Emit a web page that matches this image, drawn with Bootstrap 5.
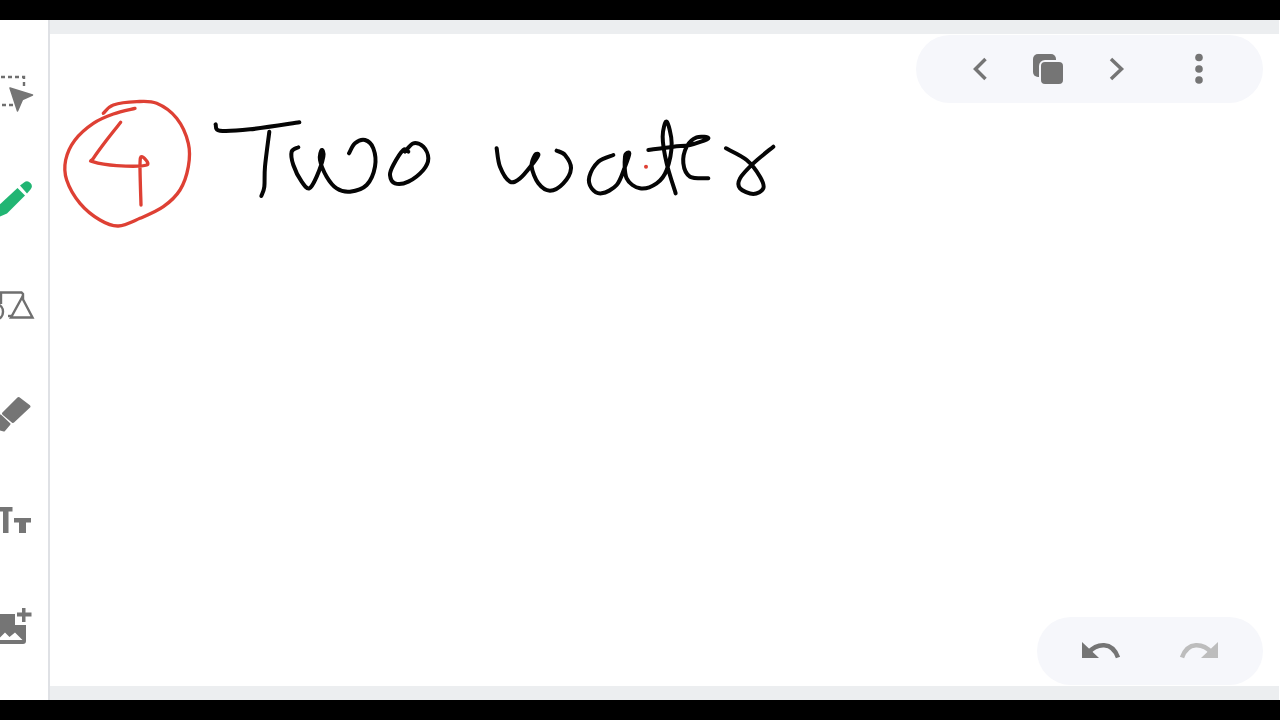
<!DOCTYPE html>
<html lang="en">
<head>
<meta charset="utf-8">
<title>Whiteboard</title>
<link href="https://cdn.jsdelivr.net/npm/bootstrap@5.3.0/dist/css/bootstrap.min.css" rel="stylesheet">
<style>
html,body{height:100%;margin:0;overflow:hidden;background:#000}
.stage{width:1280px;height:720px;padding:20px 0;background:#000}
.board{height:680px;background:#fff}
.toolrail{width:50px;border-right:2px solid #dfe1e5;background:#fff;padding-top:22px}
.toolslot{display:block;width:48px;height:107px}
.sheet{width:1230px;position:relative;background:#fff}
.strip{height:14px;background:#eceef0;margin-right:1px}
.inkarea{height:652px;position:relative}
.inklayer{position:absolute;left:0;top:0;width:1230px;height:652px}
.floatbar{position:absolute;background:#f6f7fb;border-radius:34px;height:68px}
.navbar-float{left:866px;top:1px;width:347px;padding-left:30px}
.history-float{left:987px;top:583px;width:226px;padding-left:13px}
.navslot{display:block;width:68px;height:68px}
.navslot-menu{margin-left:15px}
.histslot{display:block;width:100px;height:68px}
.ic{fill:#757575}
.ics{fill:none;stroke:#6f6f6f;stroke-width:2.400}
.ink-red{fill:none;stroke:#de4034;stroke-width:10;stroke-linecap:round;stroke-linejoin:round}
.ink-black{fill:none;stroke:#050505;stroke-width:12;stroke-linecap:round;stroke-linejoin:round}
</style>
</head>
<body>
<div class="stage">
  <div class="board d-flex">
    <div class="toolrail d-flex flex-column flex-shrink-0">
      <svg class="toolslot" viewBox="0 42 48 107">
        <path class="ics" stroke-dasharray="4 3" d="M1 77H24V86"/>
        <path class="ics" stroke-dasharray="4 3" d="M2 105H14"/>
        <path class="ic" stroke="#757575" stroke-width="1.500" stroke-linejoin="round" d="M10 88L32.500 95L22.500 99.500L17.500 111Z"/>
      </svg>
      <svg class="toolslot" viewBox="0 149 48 107">
        <path fill="#21b573" d="M20 185.500L24 182.500a4.800 4.800 0 0 1 6.500 7L27 193.500Z"/>
        <path fill="#21b573" d="M17.500 188L25 195.500L7 213.500L0 216.500L-3 216V207Z"/>
      </svg>
      <svg class="toolslot" viewBox="0 256 48 107">
        <path class="ics" d="M0 292.500H21.500L23 294V299"/>
        <path class="ics" d="M1 293V304"/>
        <path class="ics" d="M-3 304a8 8 0 0 1 0 15.500"/>
        <path class="ics" d="M22 297.500L32.500 317.500H11Z"/>
        <path class="ics" d="M8 316H13"/>
      </svg>
      <svg class="toolslot" viewBox="0 363 48 107">
        <path class="ic" stroke="#757575" stroke-width="3" stroke-linejoin="round" d="M18.500 398.500L29 406.500L13 421.500L3.500 413.500Z"/>
        <path class="ic" stroke="#757575" stroke-width="2" stroke-linejoin="round" d="M-2 416L0.500 415.500L9.500 424L4 430.500L-2 429Z"/>
      </svg>
      <svg class="toolslot" viewBox="0 470 48 107">
        <path class="ic" d="M0 507H12.500V511.500H8.500V533H3V511.500H0Z"/>
        <path class="ic" d="M14 518H31V522.500H26V533H19V522.500H14Z"/>
      </svg>
      <svg class="toolslot" viewBox="0 577 48 107">
        <path class="ic" d="M0 614H15V625H26V641a3 3 0 0 1-3 3H0Z"/>
        <path fill="#fff" d="M0 640V637.500L5 632.500L9.500 637L15 632.500L22.500 640Z"/>
        <path class="ic" d="M22 608H25.500V612.500H31.500V616.500H25.500V622H22V616.500H17V612.500H22Z"/>
      </svg>
    </div>
    <div class="sheet d-flex flex-column">
      <div class="strip"></div>
      <div class="inkarea flex-grow-1">
        <svg class="inklayer" viewBox="50 34 1230 652">
          <g transform="translate(50 90) scale(.33333)">
            <path class="ink-red js-ink" data-pts="160,70 190,45 260,35 320,40 380,85 415,160 415,230 390,300 340,350 270,385 205,408 150,390 90,340 50,270 47,210 75,150 130,100 190,72 255,55"/>
            <path class="ink-red js-ink" data-pts="212,97 170,150 130,205 128,215 200,227 290,225 275,200 270,225 273,345"/>
            <path class="ink-black js-ink" data-pts="497,103 510,122 600,118 748,97"/>
            <path class="ink-black js-ink" data-pts="658,125 645,230 643,290 634,318"/>
            <path class="ink-black js-ink" data-pts="745,172 725,185 730,225 755,275 778,295 800,260 820,200 815,180 810,210 830,260 860,295 900,305 950,285 975,230 970,175 945,150 915,160 897,190"/>
            <path class="ink-black js-ink" data-pts="1075,185 1060,180 1030,225 1020,255 1035,280 1075,275 1120,240 1135,205 1120,170 1090,160 1065,185"/>
          </g>
          <g transform="translate(470 100) scale(.33333)">
            <path class="ink-black js-ink" data-pts="80,145 90,200 120,245 150,235 185,195 205,165 195,165 185,200 205,250 240,272 280,250 303,205 285,165 260,152"/>
            <path class="ink-black js-ink" data-pts="430,165 385,185 358,230 365,265 395,280 440,255 465,200 478,160 465,170 470,235 510,265 560,250 590,210 605,130 590,65 578,110 590,190 617,280"/>
            <path class="ink-black js-ink" data-pts="535,150 610,140 660,135 715,115 680,112 650,140 640,190 660,230 715,235"/>
            <path class="ink-black js-ink" data-pts="768,145 830,180 870,230 880,265 850,282 810,265 810,235 850,190 910,140"/>
            <circle cx="528" cy="200" r="6" fill="#de4034"/>
          </g>
        </svg>
        <div class="floatbar navbar-float d-flex align-items-center">
          <svg class="navslot" viewBox="946 35 68 68">
            <path fill="none" stroke="#757575" stroke-width="3.500" d="M985.500 59L975.500 69L985.500 79"/>
          </svg>
          <svg class="navslot" viewBox="1014 35 68 68">
            <rect class="ic" x="1033" y="54" width="23" height="23" rx="5"/>
            <rect class="ic" stroke="#f6f7fb" stroke-width="2" x="1040" y="61" width="24" height="24" rx="5"/>
          </svg>
          <svg class="navslot" viewBox="1082 35 68 68">
            <path fill="none" stroke="#757575" stroke-width="3.500" d="M1111 59L1121.500 69L1111 79"/>
          </svg>
          <svg class="navslot navslot-menu" viewBox="1165 35 68 68">
            <circle class="ic" cx="1199" cy="57.500" r="3.800"/>
            <circle class="ic" cx="1199" cy="69" r="3.800"/>
            <circle class="ic" cx="1199" cy="80" r="3.800"/>
          </svg>
        </div>
        <div class="floatbar history-float d-flex align-items-center">
          <svg class="histslot" viewBox="1050 617 100 68">
            <path class="ic" d="M1082 642V658H1099Z"/>
            <path fill="none" stroke="#757575" stroke-width="4.500" d="M1088 653C1097 643 1112 641 1118 657.500"/>
          </svg>
          <svg class="histslot" viewBox="1150 617 100 68">
            <path fill="#bdbdbd" d="M1218 642V658H1201Z"/>
            <path fill="none" stroke="#bdbdbd" stroke-width="4.500" d="M1212 653C1203 643 1188 641 1182 657.500"/>
          </svg>
        </div>
      </div>
      <div class="strip"></div>
    </div>
  </div>
</div>
<script src="https://cdn.jsdelivr.net/npm/bootstrap@5.3.0/dist/js/bootstrap.bundle.min.js"></script>
<script>
document.querySelectorAll('.js-ink').forEach(function(el){
  var p=el.dataset.pts.split(' ').map(function(s){return s.split(',').map(Number)});
  var d='M'+p[0][0]+' '+p[0][1];
  for(var i=0;i<p.length-1;i++){
    var a=p[Math.max(i-1,0)],b=p[i],c=p[i+1],e=p[Math.min(i+2,p.length-1)];
    d+='C'+(b[0]+(c[0]-a[0])/6)+' '+(b[1]+(c[1]-a[1])/6)+' '+(c[0]-(e[0]-b[0])/6)+' '+(c[1]-(e[1]-b[1])/6)+' '+c[0]+' '+c[1];
  }
  el.setAttribute('d',d);
});
</script>
</body>
</html>
